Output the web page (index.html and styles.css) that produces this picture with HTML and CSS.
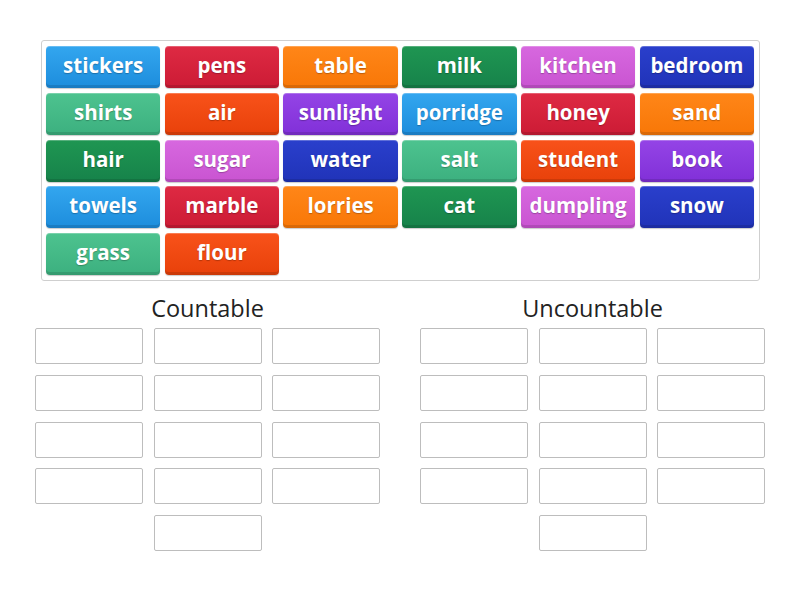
FILE: index.html
```html
<!DOCTYPE html>
<html>
<head>
<meta charset="utf-8">
<link rel="stylesheet" href="styles.css">
</head>
<body>
<div class="page">
  <div class="bank">
    <div class="tile blue">stickers</div>
    <div class="tile red">pens</div>
    <div class="tile orange">table</div>
    <div class="tile dgreen">milk</div>
    <div class="tile pink">kitchen</div>
    <div class="tile dblue">bedroom</div>
    <div class="tile teal">shirts</div>
    <div class="tile redorange">air</div>
    <div class="tile purple">sunlight</div>
    <div class="tile blue">porridge</div>
    <div class="tile red">honey</div>
    <div class="tile orange">sand</div>
    <div class="tile dgreen">hair</div>
    <div class="tile pink">sugar</div>
    <div class="tile dblue">water</div>
    <div class="tile teal">salt</div>
    <div class="tile redorange">student</div>
    <div class="tile purple">book</div>
    <div class="tile blue">towels</div>
    <div class="tile red">marble</div>
    <div class="tile orange">lorries</div>
    <div class="tile dgreen">cat</div>
    <div class="tile pink">dumpling</div>
    <div class="tile dblue">snow</div>
    <div class="tile teal">grass</div>
    <div class="tile redorange">flour</div>
  </div>
  <div class="groups">
    <div class="group">
      <div class="heading">Countable</div>
      <div class="slots">
        <div class="slot"></div><div class="slot"></div><div class="slot"></div>
        <div class="slot"></div><div class="slot"></div><div class="slot"></div>
        <div class="slot"></div><div class="slot"></div><div class="slot"></div>
        <div class="slot"></div><div class="slot"></div><div class="slot"></div>
        <div class="slot mid"></div>
      </div>
    </div>
    <div class="group">
      <div class="heading">Uncountable</div>
      <div class="slots">
        <div class="slot"></div><div class="slot"></div><div class="slot"></div>
        <div class="slot"></div><div class="slot"></div><div class="slot"></div>
        <div class="slot"></div><div class="slot"></div><div class="slot"></div>
        <div class="slot"></div><div class="slot"></div><div class="slot"></div>
        <div class="slot mid"></div>
      </div>
    </div>
  </div>
</div>
</body>
</html>
```
FILE: styles.css
```css
html, body {
  margin: 0;
  padding: 0;
  background: #ffffff;
  font-family: "Open Sans", "Liberation Sans", sans-serif;
}
.page {
  width: 800px;
  height: 600px;
  padding-top: 40px;
  box-sizing: border-box;
}
.bank {
  margin-left: 41px;
  width: 719px;
  box-sizing: border-box;
  border: 1px solid #cfcfcf;
  border-radius: 3px;
  padding: 5px 5px 5px 4px;
  display: grid;
  grid-template-columns: repeat(6, 1fr);
  grid-auto-rows: 42px;
  gap: 4.75px 4.4px;
}
.tile {
  border-radius: 4px;
  color: #ffffff;
  font-weight: 700;
  font-size: 20.5px;
  display: flex;
  align-items: center;
  justify-content: center;
  padding-bottom: 4px;
  box-sizing: border-box;
  text-shadow: 0 1px 1px rgba(0,0,0,0.25);
  box-shadow: inset 0 1px 0 rgba(255,255,255,0.25), inset 0 -3px 0 rgba(0,0,0,0.12), 0 1px 1px rgba(0,0,0,0.2);
}
.blue { background: linear-gradient(#33a6ef, #1d8ddc); }
.red { background: linear-gradient(#de2a43, #cc1b35); }
.orange { background: linear-gradient(#ff8618, #f87707); }
.dgreen { background: linear-gradient(#1f9652, #16824a); }
.pink { background: linear-gradient(#d768df, #c954d1); }
.dblue { background: linear-gradient(#2a3fcc, #2033b8); }
.teal { background: linear-gradient(#4dc38f, #3cb07f); }
.redorange { background: linear-gradient(#f8521a, #e8410a); }
.purple { background: linear-gradient(#9444e6, #8130d8); }

.groups {
  display: flex;
  margin-top: 13px;
  padding-left: 35px;
  gap: 40px;
}
.group {
  width: 345px;
  display: flex;
  flex-direction: column;
  align-items: center;
}
.heading {
  font-size: 23.5px;
  color: #222222;
  line-height: 30px;
  height: 30px;
  margin-bottom: 4px;
  margin-top: -1px;
  padding-bottom: 1px;
}
.slots {
  display: grid;
  grid-template-columns: repeat(3, 108px);
  grid-auto-rows: 36px;
  gap: 10.75px 10.5px;
}
.slot {
  border: 1px solid #bdbdbd;
  border-radius: 2px;
  box-sizing: border-box;
  background: #fff;
}
.mid {
  grid-column: 2;
}
```
